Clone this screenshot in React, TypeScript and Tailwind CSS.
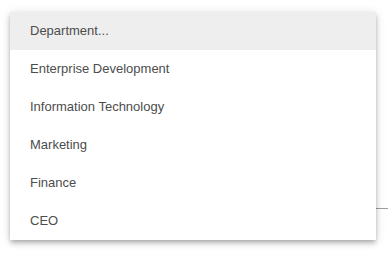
import React from "react";

const items = [
  "Department...",
  "Enterprise Development",
  "Information Technology",
  "Marketing",
  "Finance",
  "CEO",
];

export default function App() {
  return (
    <div className="relative w-[388px] h-[255px] bg-white overflow-hidden" style={{ fontFamily: "'Liberation Sans', Arial, sans-serif" }}>
      <div className="absolute left-[376px] top-[208px] w-[12px] h-px bg-[#9e9e9e]" />
      <div className="absolute left-[10px] top-[12px] w-[366px] bg-white shadow-[0_2px_4px_-1px_rgba(0,0,0,0.2),0_4px_5px_0_rgba(0,0,0,0.14),0_1px_10px_0_rgba(0,0,0,0.12)]">
        {items.map((t, i) => (
          <div
            key={t}
            className={`h-[38px] flex items-center pl-[20px] text-[13px] text-[#4d4d4d] ${i === 0 ? "bg-[#eeeeee]" : ""}`}
          >
            {t}
          </div>
        ))}
      </div>
    </div>
  );
}
